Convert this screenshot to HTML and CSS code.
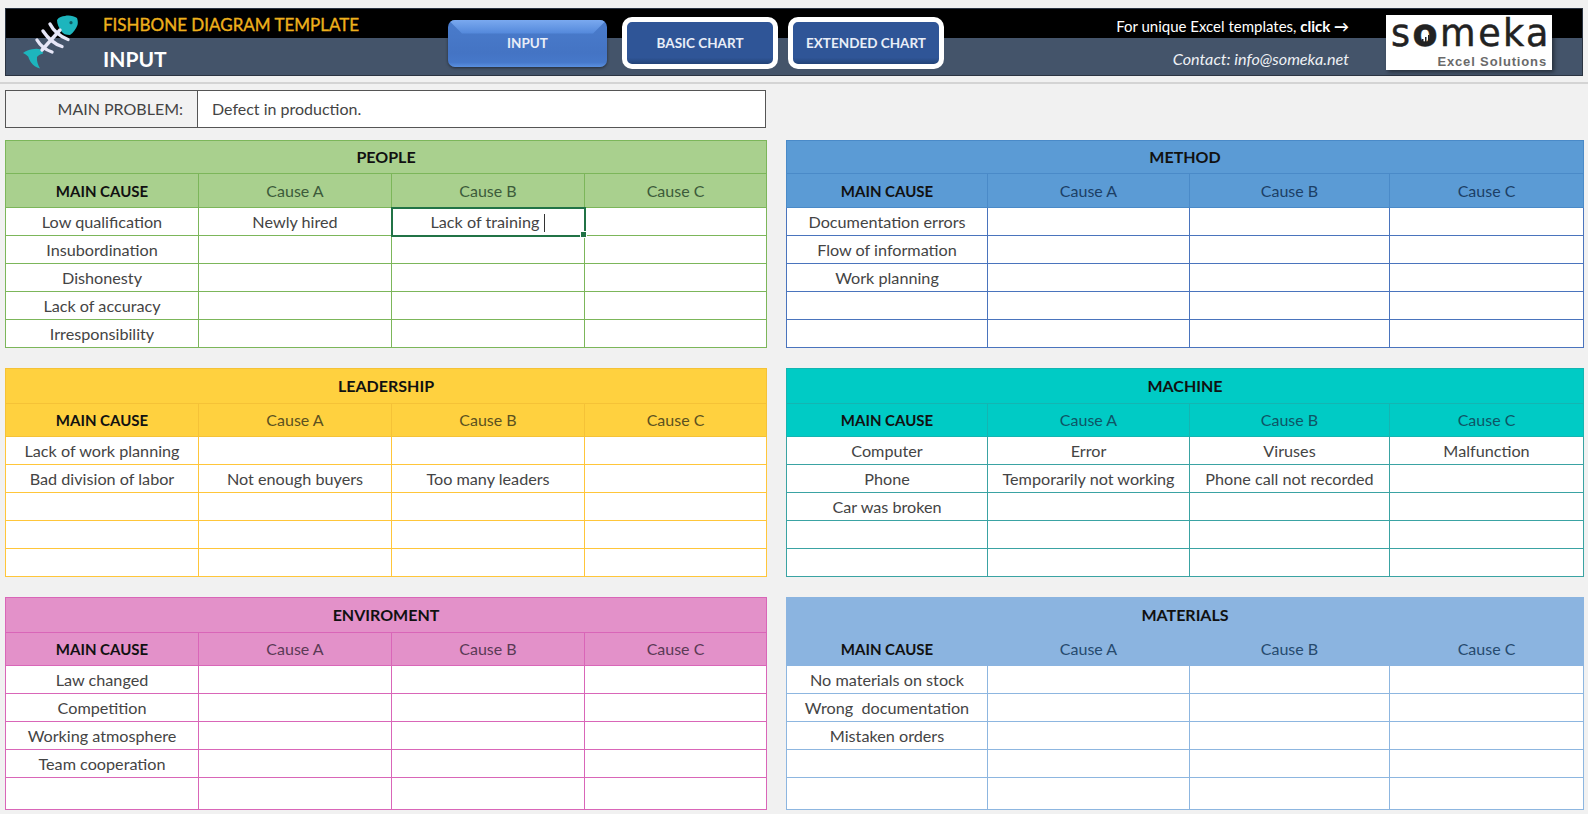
FILE: index.html
```html
<!DOCTYPE html>
<html lang="en">
<head>
<meta charset="utf-8">
<title>Fishbone Diagram Template</title>
<link rel="stylesheet" href="styles.css">
</head>
<body>
<header class="topbar">
  <svg class="fish" viewBox="0 0 56 56" aria-hidden="true">
    <path class="fish-fill" d="M35 6 C37 3 40 2 43 2 C47 1 52 2 55 4 C56 7 56 9 55.5 11 C54 15 51 19 48 21 C44 21 41 20 39.5 17.5 C37 14 35 10 35 6 Z"/>
    <circle class="fish-eye" cx="49" cy="8.7" r="1.6"/>
    <path class="fish-fill" d="M1 39 C4 37 7 35.500 10 35.300 C13 34.500 16 34.500 18 35.300 C20 36.500 21 38 21 39.500 C18 40.500 16 41.500 15 43 C14.500 47 16 51 18 54.500 C14 53.500 11 51.500 9.700 49.300 C8 47 7 45 6.300 42.700 C4.500 41 3 40 1 39 Z"/>
    <g class="fish-bones">
      <path d="M20 36 L38 16"/>
      <path d="M28 10 C31 16 38 23 46 25.500"/>
      <path d="M21 17 C25 23 32 30 40 32.500"/>
      <path d="M15 26 C18 31 24 36 30 38"/>
    </g>
  </svg>
  <div class="brand">
    <div class="brand-title">FISHBONE DIAGRAM TEMPLATE</div>
    <div class="brand-sub">INPUT</div>
  </div>
  <nav class="nav">
    <a class="btn btn-active">INPUT</a>
    <a class="btn btn-basic">BASIC CHART</a>
    <a class="btn btn-extended">EXTENDED CHART</a>
  </nav>
  <div class="promo">
    <div class="promo-top">For unique Excel templates, <b>click →</b></div>
    <div class="promo-bottom">Contact: info@someka.net</div>
  </div>
  <div class="logo">
    <div class="logo-word">s<span class="logo-o">o</span>meka</div>
    <div class="logo-tag">Excel Solutions</div>
  </div>
</header>
<div class="rule"></div>
<div class="problem">
  <div class="problem-label">MAIN PROBLEM:</div>
  <div class="problem-value">Defect in production.</div>
</div>
<main class="tables">

  <table class="sheet left people h-a">
    <colgroup><col class="c0"><col class="c1"><col class="c2"><col class="c3"></colgroup>
    <tr class="title"><th colspan="4">PEOPLE</th></tr>
    <tr class="heads"><th>MAIN CAUSE</th><td>Cause A</td><td>Cause B</td><td>Cause C</td></tr>
    <tr><td>Low qualification</td><td>Newly hired</td><td class="selected">Lack of training <span class="caret"></span></td><td></td></tr>
    <tr><td>Insubordination</td><td></td><td></td><td></td></tr>
    <tr><td>Dishonesty</td><td></td><td></td><td></td></tr>
    <tr><td>Lack of accuracy</td><td></td><td></td><td></td></tr>
    <tr><td>Irresponsibility</td><td></td><td></td><td></td></tr>
  </table>

  <table class="sheet right method h-a">
    <colgroup><col class="c0"><col class="c1"><col class="c2"><col class="c3"></colgroup>
    <tr class="title"><th colspan="4">METHOD</th></tr>
    <tr class="heads"><th>MAIN CAUSE</th><td>Cause A</td><td>Cause B</td><td>Cause C</td></tr>
    <tr><td>Documentation errors</td><td></td><td></td><td></td></tr>
    <tr><td>Flow of information</td><td></td><td></td><td></td></tr>
    <tr><td>Work planning</td><td></td><td></td><td></td></tr>
    <tr><td></td><td></td><td></td><td></td></tr>
    <tr><td></td><td></td><td></td><td></td></tr>
  </table>

  <table class="sheet left leadership h-b">
    <colgroup><col class="c0"><col class="c1"><col class="c2"><col class="c3"></colgroup>
    <tr class="title"><th colspan="4">LEADERSHIP</th></tr>
    <tr class="heads"><th>MAIN CAUSE</th><td>Cause A</td><td>Cause B</td><td>Cause C</td></tr>
    <tr><td>Lack of work planning</td><td></td><td></td><td></td></tr>
    <tr><td>Bad division of labor</td><td>Not enough buyers</td><td>Too many leaders</td><td></td></tr>
    <tr><td></td><td></td><td></td><td></td></tr>
    <tr><td></td><td></td><td></td><td></td></tr>
    <tr><td></td><td></td><td></td><td></td></tr>
  </table>

  <table class="sheet right machine h-b">
    <colgroup><col class="c0"><col class="c1"><col class="c2"><col class="c3"></colgroup>
    <tr class="title"><th colspan="4">MACHINE</th></tr>
    <tr class="heads"><th>MAIN CAUSE</th><td>Cause A</td><td>Cause B</td><td>Cause C</td></tr>
    <tr><td>Computer</td><td>Error</td><td>Viruses</td><td>Malfunction</td></tr>
    <tr><td>Phone</td><td>Temporarily not working</td><td>Phone call not recorded</td><td></td></tr>
    <tr><td>Car was broken</td><td></td><td></td><td></td></tr>
    <tr><td></td><td></td><td></td><td></td></tr>
    <tr><td></td><td></td><td></td><td></td></tr>
  </table>

  <table class="sheet left enviroment h-c">
    <colgroup><col class="c0"><col class="c1"><col class="c2"><col class="c3"></colgroup>
    <tr class="title"><th colspan="4">ENVIROMENT</th></tr>
    <tr class="heads"><th>MAIN CAUSE</th><td>Cause A</td><td>Cause B</td><td>Cause C</td></tr>
    <tr><td>Law changed</td><td></td><td></td><td></td></tr>
    <tr><td>Competition</td><td></td><td></td><td></td></tr>
    <tr><td>Working atmosphere</td><td></td><td></td><td></td></tr>
    <tr><td>Team cooperation</td><td></td><td></td><td></td></tr>
    <tr class="tall"><td></td><td></td><td></td><td></td></tr>
  </table>

  <table class="sheet right materials h-c">
    <colgroup><col class="c0"><col class="c1"><col class="c2"><col class="c3"></colgroup>
    <tr class="title"><th colspan="4">MATERIALS</th></tr>
    <tr class="heads"><th>MAIN CAUSE</th><td>Cause A</td><td>Cause B</td><td>Cause C</td></tr>
    <tr><td>No materials on stock</td><td></td><td></td><td></td></tr>
    <tr><td>Wrong  documentation</td><td></td><td></td><td></td></tr>
    <tr><td>Mistaken orders</td><td></td><td></td><td></td></tr>
    <tr><td></td><td></td><td></td><td></td></tr>
    <tr class="tall"><td></td><td></td><td></td><td></td></tr>
  </table>

</main>
</body>
</html>
```
FILE: styles.css
```css
* { box-sizing: border-box; }
html, body { margin: 0; height: 814px; overflow: hidden; }
body {
  padding: 8px 5px 0;
  background: #f1f1f1;
  font-family: Lato, "Liberation Sans", sans-serif;
  color: #444;
}

/* Top bar */
.topbar {
  display: flex;
  align-items: stretch;
  width: 1578px;
  height: 68px;
  border: 1px solid #2b3442;
  background: linear-gradient(#000 0 44%, #44546a 44% 100%);
  color: #fff;
}
.fish { width: 56px; height: 56px; margin: 5px 0 0 16px; flex: none; }
.fish-fill { fill: #1db5bd; }
.fish-eye { fill: #0c5c62; }
.fish-bones path { fill: none; stroke: #e6e6f7; stroke-width: 3.4; stroke-linecap: round; }
.brand { width: 345px; margin-left: 25px; flex: none; }
.brand-title {
  margin-top: 4px;
  color: #eeb01c;
  font-size: 17px;
  line-height: 24px;
  white-space: nowrap;
  -webkit-text-stroke: .35px #eeb01c;
}
.brand-sub { margin-top: 9px; font-size: 21px; font-weight: 700; line-height: 26px; }

.nav { display: flex; align-items: center; flex: none; padding-top: 2px; }
.btn {
  display: flex;
  align-items: center;
  justify-content: center;
  color: #e9eef8;
  font-size: 13.5px;
  font-weight: 700;
  border-radius: 8px;
}
.btn-active {
  position: relative;
  overflow: hidden;
  width: 159px;
  height: 47px;
  margin-right: 15px;
  border-radius: 7px;
  background: linear-gradient(#4a7ccc 0, #4474c4 70%, #4678ca 90%, #5a90e0 100%);
  box-shadow: 0 1px 3px rgba(0, 0, 0, .5);
}
.btn-active::before {
  content: "";
  position: absolute;
  inset: 0 0 auto;
  height: 14px;
  background: linear-gradient(#7aa9ef, #5287da);
  clip-path: polygon(0 0, 100% 0, calc(100% - 14px) 100%, 14px 100%);
}
.btn-basic, .btn-extended {
  width: 156px;
  height: 52px;
  border: 5px solid #fff;
  border-radius: 10px;
  background: linear-gradient(#2f5597 0, #2f5597 85%, #234478 100%);
}
.btn-extended { margin-left: 10px; }

.promo { flex: 1; text-align: right; font-size: 15px; padding-right: 37px; }
.promo-top { margin-top: 7px; line-height: 20px; }
.promo-bottom { margin-top: 13px; font-size: 16.2px; font-style: italic; line-height: 20px; color: #eef1f5; }

.logo {
  width: 166px;
  height: 55px;
  margin: 6px 30px 0 0;
  padding: 1px 5px 0;
  background: #fff;
  box-shadow: 2px 2px 4px rgba(0, 0, 0, .45);
  color: #222;
  flex: none;
  text-align: right;
}
.logo-word {
  font-family: "DejaVu Sans", sans-serif;
  font-size: 36.5px;
  line-height: 36px;
  letter-spacing: 2.5px;
  text-align: center;
  white-space: nowrap;
  -webkit-text-stroke: .5px #222;
}
.logo-o { position: relative; font-weight: 700; }
.logo-o::after {
  content: "";
  position: absolute;
  left: 8px;
  top: 18px;
  width: 9px;
  height: 12px;
  background:
    linear-gradient(#222, #222) 1px 100% / 1.500px 3px no-repeat,
    linear-gradient(#222, #222) 4px 100% / 1.500px 5px no-repeat,
    linear-gradient(#222, #222) 7px 100% / 1.500px 7px no-repeat;
}
.logo-tag {
  margin-top: 3px;
  color: #6a6a6a;
  font-family: "Liberation Sans", sans-serif;
  font-size: 13px;
  font-weight: 700;
  letter-spacing: .85px;
  line-height: 14px;
}

.rule { height: 2px; margin: 6px -5px 0; background: #d4d4d4; }

/* Main problem */
.problem {
  display: flex;
  width: 761px;
  height: 38px;
  margin-top: 6px;
  border: 1px solid #555;
  font-size: 16px;
  line-height: 36px;
}
.problem-label { width: 192px; padding-right: 14px; background: #f2f2f2; border-right: 1px solid #555; text-align: right; }
.problem-value { flex: 1; padding-left: 14px; background: #fff; }

/* Tables */
.tables {
  display: grid;
  grid-template-columns: 761px 797px;
  column-gap: 20px;
  row-gap: 20px;
  margin-top: 12px;
}
.sheet {
  table-layout: fixed;
  border-collapse: collapse;
  background: #fff;
  font-size: 16.2px;
  text-align: center;
}
.left { width: 761px; }
.right { width: 797px; }
.sheet th, .sheet td {
  padding: 0;
  border: 1px solid var(--line);
  white-space: pre;
}
.left .c0 { width: 193px; }
.left .c1 { width: 193px; }
.left .c2 { width: 193px; }
.left .c3 { width: 182px; }
.right .c0 { width: 201px; }
.right .c1 { width: 202px; }
.right .c2 { width: 200px; }
.right .c3 { width: 194px; }

.sheet tr { height: 28px; }
.sheet .tall { height: 32px; }
.h-a .title { height: 33px; }
.h-a .heads { height: 34px; }
.h-b .title, .h-c .title { height: 35px; }
.h-b .heads, .h-c .heads { height: 33px; }
.title th { padding-bottom: 2px; background: var(--fill); color: #111; font-size: 16px; font-weight: 700; }
.heads th, .heads td { padding-bottom: 1px; background: var(--fill); color: var(--ink); font-size: 16px; }
.heads th { padding-bottom: 0; color: #111; font-size: 15px; font-weight: 700; }

.people { --fill: #a9d08e; --line: #7cb65a; --ink: #3c5b3a; }
.method { --fill: #5b9bd5; --line: #4a74bd; --ink: #1c3f66; }
.leadership { --fill: #ffd13f; --line: #ffc63a; --ink: #5c5120; }
.machine { --fill: #00cbc5; --line: #3aa3a3; --ink: #0e5566; }
.enviroment { --fill: #e391c9; --line: #d966b8; --ink: #5a3a55; }
.materials { --fill: #8bb4e0; --line: #8db6e0; --ink: #264a6e; }
.machine .title th, .machine .heads th, .machine .heads td { border-color: #14b5b2; }
.materials .title th, .materials .heads th, .materials .heads td { border-color: #8bb4e0; }
.leadership .title th, .leadership .heads th, .leadership .heads td { border-color: #f5c237; }
.method .heads th, .method .heads td, .method .title th { border-color: #4a8ac8; }

.selected {
  position: relative;
  outline: 2px solid #217346;
  outline-offset: -1px;
}
.selected::after {
  content: "";
  position: absolute;
  right: -3px;
  bottom: -3px;
  width: 5px;
  height: 5px;
  background: #217346;
  border: 1px solid #fff;
}
.caret {
  display: inline-block;
  width: 1px;
  height: 18px;
  margin-left: 1px;
  background: #333;
  vertical-align: -4px;
}
```
